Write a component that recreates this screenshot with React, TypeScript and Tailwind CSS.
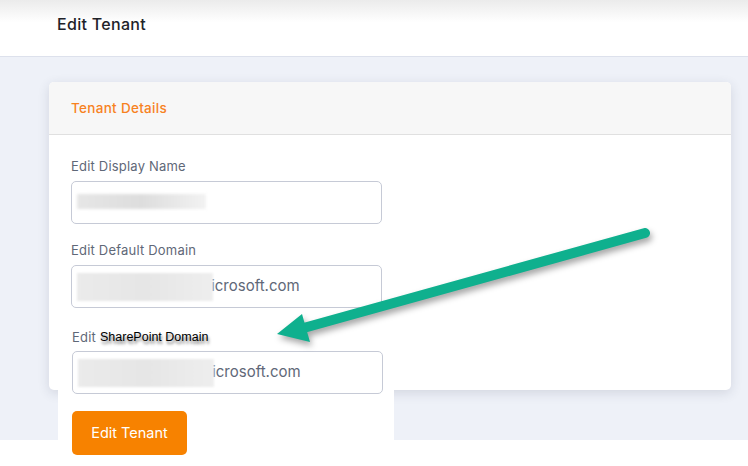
export default function App() {
    return (
        <div className="relative w-[748px] h-[466px] overflow-hidden bg-white font-['Inter',sans-serif]">
            {/* Top bar */}
            <header className="h-[57px] flex items-center pl-[57px] pb-[8px] border-b border-[#dde1ec] bg-gradient-to-b from-[#ebebeb] via-white via-40% to-white">
                <h1 className="text-[16px] font-medium tracking-[0.3px] text-[#1f2329]">Edit Tenant</h1>
            </header>

            <main className="h-[383px] bg-[#eef1f8] pt-[25px] pl-[49px] pr-[17px]">
                <section className="h-[308px] bg-white rounded-[5px] shadow-[0_3px_12px_rgba(40,50,80,0.14)]">
                    <div className="h-[53px] flex items-center px-[22px] bg-[#f7f7f7] border-b border-[#e0e0e0] rounded-t-[5px]">
                        <h2 className="text-[13.5px] font-medium tracking-[0.3px] text-[#f7821f]">Tenant Details</h2>
                    </div>

                    <div className="pt-[23px] px-[22px]">
                        <label className="block text-[13px] tracking-[0.2px] leading-[16px] text-[#5f6878] mb-[7px]">Edit Display Name</label>
                        <div className="relative w-[311px] h-[43px] rounded-[5px] border border-[#c6cad6] bg-white">
                            <div className="absolute left-[5px] top-[12px] w-[129px] h-[15px] bg-gradient-to-r from-[#e6e6e6] via-[#dddddd] to-[#f2f2f2] blur-[1.5px]" />
                        </div>

                        <label className="block mt-[18px] text-[13px] tracking-[0.2px] leading-[16px] text-[#5f6878] mb-[7px]">Edit Default Domain</label>
                        <div className="relative w-[311px] h-[43px] rounded-[5px] border border-[#c6cad6] bg-white flex items-center pl-[126px]">
                            <span className="text-[15px] text-[#5f6878]">microsoft.com</span>
                            <div className="absolute left-[5px] top-[7px] w-[136px] h-[28px] bg-gradient-to-r from-[#ebebeb] via-[#e6e6e6] to-[#eeeeee] blur-[1px]" />
                        </div>

                        {/* pasted patch */}
                        <div className="-ml-[13px] mt-[8px] w-[336px] h-[124px] bg-white pt-[13px] pl-[14px]">
                            <label className="flex items-center gap-[4px] leading-[16px] mb-[6px]">
                                <span className="text-[13px] tracking-[0.2px] text-[#5f6878]">Edit</span>
                                <span className="text-[12.5px] text-black font-['Liberation_Sans',Arial,sans-serif] [text-shadow:1px_3px_3px_rgba(0,0,0,0.55)]">SharePoint Domain</span>
                            </label>
                            <div className="relative w-[311px] h-[43px] rounded-[5px] border border-[#c6cad6] bg-white flex items-center pl-[126px]">
                                <span className="text-[15px] text-[#5f6878]">microsoft.com</span>
                                <div className="absolute left-[5px] top-[7px] w-[136px] h-[28px] bg-gradient-to-r from-[#ebebeb] via-[#e6e6e6] to-[#eeeeee] blur-[1px]" />
                            </div>
                            <button className="mt-[17px] w-[115px] h-[44px] rounded-[5px] bg-[#f78200] text-white text-[14.5px]">
                                Edit Tenant
                            </button>
                        </div>
                    </div>
                </section>
            </main>

            {/* annotation arrow */}
            <svg
                className="absolute inset-0 pointer-events-none drop-shadow-[2px_4px_3px_rgba(0,0,0,0.35)]"
                width="748"
                height="466"
                viewBox="0 0 748 466"
            >
                <line x1="645" y1="233" x2="300" y2="329" stroke="#0fb08e" strokeWidth="10" strokeLinecap="round" />
                <polygon points="277,334 302,314 310,342" fill="#0fb08e" />
            </svg>
        </div>
    );
}
